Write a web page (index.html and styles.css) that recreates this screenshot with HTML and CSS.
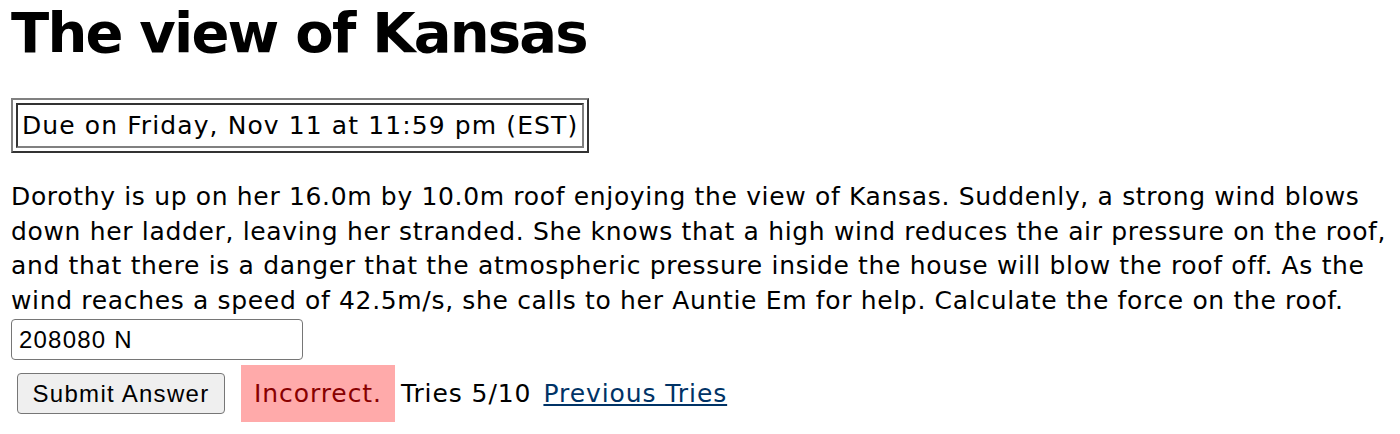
FILE: index.html
```html
<!DOCTYPE html>
<html lang="en">
<head>
  <meta charset="UTF-8">
  <title>The view of Kansas</title>
  <link rel="stylesheet" href="styles.css">
</head>
<body>
  <h1>The view of Kansas</h1>
  <table class="due">
    <tr><td>Due on Friday, Nov 11 at 11:59 pm (EST)</td></tr>
  </table>
  <p class="problem">Dorothy is up on her 16.0m by 10.0m roof enjoying the view of Kansas. Suddenly, a strong wind blows down her ladder, leaving her stranded. She knows that a high wind reduces the air pressure on the roof, and that there is a danger that the atmospheric pressure inside the house will blow the roof off. As the wind reaches a speed of 42.5m/s, she calls to her Auntie Em for help. Calculate the force on the roof.</p>
  <div class="answer">
    <input type="text" value="208080 N">
  </div>
  <div class="submit-row">
    <button type="button">Submit Answer</button>
    <span class="incorrect">Incorrect.</span>
    <span class="tries">Tries 5/10</span>
    <a href="#">Previous Tries</a>
  </div>
</body>
</html>
```

FILE: styles.css
```css
html {
  overflow: hidden;
}
body {
  font-family: "DejaVu Sans", Verdana, sans-serif;
  font-size: 25px;
  letter-spacing: 0.92px;
  margin: 0 11px;
  color: #000;
  background: #fff;
}
h1 {
  font-size: 56px;
  line-height: 65px;
  letter-spacing: -1.8px;
  margin: 0 0 33px;
}
.due {
  border-collapse: separate;
  border-spacing: 3px;
  border: 2px solid;
  border-color: #808080 #333 #333 #808080;
}
.due td {
  line-height: 29px;
  letter-spacing: 1.1px;
  padding: 6px 4px;
  border: 2px solid;
  border-color: #333 #808080 #808080 #333;
}
.problem {
  width: 1377px;
  line-height: 34.5px;
  letter-spacing: 0.66px;
  margin: 27px 0 0;
}
.answer {
  margin-top: 1px;
}
.answer input {
  font-family: "Liberation Sans", Arial, sans-serif;
  font-size: 24px;
  letter-spacing: 1.2px;
  width: 292px;
  height: 41px;
  box-sizing: border-box;
  padding: 2px 7px;
  border: 1.5px solid #767676;
  border-radius: 4px;
}
.submit-row {
  display: flex;
  align-items: center;
  margin-top: 5px;
}
.submit-row button {
  font-family: "Liberation Sans", Arial, sans-serif;
  font-size: 24px;
  letter-spacing: 1.3px;
  width: 208px;
  height: 41px;
  padding: 0;
  margin: 0 16px 0 6px;
  color: #000;
  background: #efefef;
  border: 1.5px solid #767676;
  border-radius: 4px;
}
.incorrect {
  line-height: 29px;
  background: #ffaaaa;
  color: #880000;
  padding: 14px 13px;
  margin-right: 6px;
}
.tries {
  margin-right: 12px;
}
.submit-row a {
  color: #003366;
}
```
